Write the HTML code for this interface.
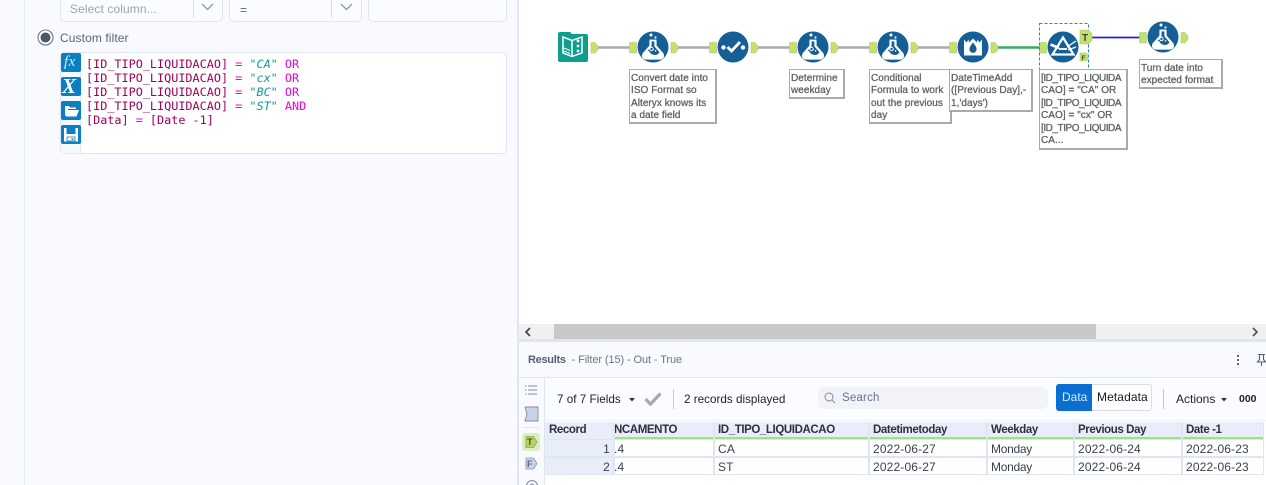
<!DOCTYPE html>
<html><head><meta charset="utf-8">
<style>
html,body{margin:0;padding:0;width:1266px;height:485px;overflow:hidden;background:#fff;font-family:"Liberation Sans",sans-serif}
.a{position:absolute;box-sizing:border-box}
.t{position:absolute;white-space:nowrap}
.note{position:absolute;box-sizing:border-box;background:#fff;border:1px solid #aaa;border-right:2px solid #aaa;border-bottom:2px solid #aaa;font:10px/12.4px "Liberation Sans",sans-serif;-webkit-text-stroke:.3px #626262;color:#626262;padding:3px 0 0 1px;white-space:nowrap;letter-spacing:.05px}
.note span{letter-spacing:-.45px}
.code{position:absolute;left:86px;font:11.8px/14px "DejaVu Sans Mono",monospace;white-space:pre;color:#a0005a}
.k{color:#f000e0}.s{color:#109a9a;font-style:italic}
.hd,.cell{position:absolute;box-sizing:border-box;font-size:12px;white-space:nowrap;letter-spacing:.15px}
.hd{top:422px;height:17px;background:#e9edf9;border-bottom:2px solid #97e87a;color:#2c3140;font-weight:bold;font-size:11.5px;letter-spacing:-.4px;line-height:17px;padding-left:3px}
.cell{height:16px;background:#fff;color:#3a3f4d;line-height:18px;padding-left:4px}
.rec{background:#e9edf9;text-align:right;padding-right:3px;padding-left:0}
</style></head><body>

<!-- left panel -->
<div class="a" style="left:0;top:0;width:518px;height:485px;background:#f8faff"></div>
<div class="a" style="left:24px;top:0;width:1px;height:485px;background:#e1e7f3"></div>
<div class="a" style="left:517px;top:0;width:2px;height:485px;background:#dfe5f1"></div>

<div class="a" style="left:60px;top:-8px;width:163px;height:30px;background:#fafcff;border:1px solid #dfe5f1;border-radius:5px"></div>
<div class="a" style="left:193px;top:0;width:1px;height:18px;background:#d8deea"></div>
<div class="t" style="left:70px;top:2px;font-size:12px;line-height:15px;color:#98a3bb;letter-spacing:.1px">Select column...</div>
<svg class="a" style="left:201px;top:3px" width="13" height="8"><path d="M1 1l5.500 5.500L12 1" fill="none" stroke="#8c98b0" stroke-width="1.300"/></svg>

<div class="a" style="left:229px;top:-8px;width:133px;height:30px;background:#fafcff;border:1px solid #dfe5f1;border-radius:5px"></div>
<div class="a" style="left:331px;top:0;width:1px;height:18px;background:#d8deea"></div>
<div class="t" style="left:240px;top:3px;font-size:12px;line-height:15px;color:#5a6478">=</div>
<svg class="a" style="left:340px;top:3px" width="13" height="8"><path d="M1 1l5.500 5.500L12 1" fill="none" stroke="#8c98b0" stroke-width="1.300"/></svg>

<div class="a" style="left:368px;top:-8px;width:139px;height:30px;background:#fafcff;border:1px solid #dfe5f1;border-radius:5px"></div>

<svg class="a" style="left:37px;top:29px" width="17" height="17"><circle cx="8.500" cy="8.500" r="7.500" fill="#fff" stroke="#6a7488" stroke-width="1.100"/><circle cx="8.500" cy="8.500" r="5" fill="#4b566f"/></svg>
<div class="t" style="left:60px;top:31px;font-size:12px;line-height:15px;color:#5a6478;letter-spacing:.1px">Custom filter</div>

<div class="a" style="left:60px;top:52px;width:447px;height:102px;background:#fff;border:1px solid #dfe5f1;border-radius:5px"></div>
<div class="a" style="left:61px;top:53px;width:20px;height:100px;background:#f6f8fd;border-right:1px solid #dfe5f1"></div>

<div class="a" style="left:61px;top:53px;width:20px;height:19px;background:#0a7fc2;border-radius:2px"></div>
<div class="t" style="left:64px;top:53px;font:italic 15px/18px 'Liberation Serif',serif;color:#dcecf7;letter-spacing:.5px">fx</div>
<div class="a" style="left:61px;top:77px;width:20px;height:19px;background:#0a7fc2;border-radius:2px"></div>
<div class="t" style="left:62px;top:76px;font:italic bold 21px/20px 'Liberation Serif',serif;color:#fff">X</div>
<div class="a" style="left:61px;top:101px;width:20px;height:19px;background:#0a7fc2;border-radius:2px"></div>
<svg class="a" style="left:61px;top:101px" width="20" height="19"><path d="M4 5h4l1 1.500h6V8H7L5.500 15 4 14.500z" fill="#fff"/><path d="M6.500 9H18l-2.500 6.500H5z" fill="#fff"/></svg>
<div class="a" style="left:61px;top:125px;width:20px;height:19px;background:#0a7fc2;border-radius:2px"></div>
<svg class="a" style="left:61px;top:125px" width="20" height="19"><path d="M3 3h14v13.500H3z" fill="#fff"/><path d="M5.500 3h9v6h-9z" fill="#0a7fc2"/><path d="M6 12h8v4H6z" fill="#fff" stroke="#0a7fc2" stroke-width=".8"/><path d="M10.500 13.500h2v1.500h-2z" fill="#0a7fc2"/></svg>

<div class="code" style="top:57px">[ID_TIPO_LIQUIDACAO] <span class="k">=</span> <span class="s">"CA"</span> <span class="k">OR</span></div>
<div class="code" style="top:71px">[ID_TIPO_LIQUIDACAO] <span class="k">=</span> <span class="s">"cx"</span> <span class="k">OR</span></div>
<div class="code" style="top:85px">[ID_TIPO_LIQUIDACAO] <span class="k">=</span> <span class="s">"BC"</span> <span class="k">OR</span></div>
<div class="code" style="top:99px">[ID_TIPO_LIQUIDACAO] <span class="k">=</span> <span class="s">"ST"</span> <span class="k">AND</span></div>
<div class="code" style="top:113px">[Data] <span class="k">=</span> [Date -1]</div>

<!-- canvas -->
<svg class="a" style="left:519px;top:0" width="747" height="324" viewBox="519 0 747 324">
<defs>
<g id="flask">
<circle r="15.500" fill="#155e96"/>
<circle cx="-2" cy="-12" r="1.500" fill="#fff"/><circle cx="2.500" cy="-9.500" r="1.100" fill="#fff"/>
<path d="M-3.500-6.500h7" stroke="#fff" stroke-width="1.800" fill="none"/>
<path d="M-2.500-6v5L-9.500 7q-1.500 4 2.500 4.500h14q4-.5 2.500-4.500L2.500-1V-6" fill="none" stroke="#fff" stroke-width="2.200"/>
<path d="M-9.500 6q3-2 5.500-2 2 4 6 4 3.500 0 5-4l3 2q1.500 5-2 5.500H-7q-3.500-.5-2.500-5.500z" fill="#fff"/>
<circle cx="-1.500" cy="2" r="1.700" fill="none" stroke="#fff" stroke-width="1"/>
<circle cx="2.500" cy="3.800" r=".8" fill="#fff"/>
</g>
<path id="anOut" d="M0-.5h4l3 3.500v3.500L4 10H0z" fill="#c2e074" stroke="#a8c85c" stroke-width=".5"/>
<path id="anIn" d="M-.5-.5h7v10.500h-7z" fill="#c2e074" stroke="#a8c85c" stroke-width=".5"/>
</defs>

<path d="M597 47.500h34M677 47.500h34M757 47.500h34M837 47.500h34M917 47.500h34" stroke="#ababab" stroke-width="2.400" fill="none"/>
<path d="M997 47.500h43" stroke="#3aa860" stroke-width="2.400" fill="none"/>
<path d="M1092 37.500h48" stroke="#2222d8" stroke-width="1.700" fill="none"/>

<!-- book -->
<path d="M558 34q0-2 2-2h10l2 2h14q2 0 2 2v24q0 2-2 2h-26q-2 0-2-2z" fill="#0e9e8c"/>
<path d="M563 37l9 3.500 10-3.500v16l-10 3.500-9-3.500z" fill="none" stroke="#fff" stroke-width="1.500"/>
<path d="M572 40.500v16" stroke="#fff" stroke-width="1.500"/>
<circle cx="578" cy="41" r="1.400" fill="#fff"/><circle cx="578" cy="46" r="1.400" fill="#fff"/><circle cx="578" cy="51" r="1.400" fill="#fff"/>
<path d="M564 48l6 2.500M564 51l6 2.500" stroke="#fff" stroke-width="1"/>

<use href="#anOut" x="591" y="43"/>
<use href="#anIn" x="630" y="43"/>
<use href="#flask" x="653" y="47"/>
<use href="#anOut" x="671" y="43"/>
<use href="#anIn" x="710" y="43"/>
<circle cx="733" cy="47" r="15.500" fill="#155e96"/>
<circle cx="723.500" cy="47.500" r="2.200" fill="#fff"/><circle cx="743" cy="47.500" r="2.200" fill="#fff"/>
<path d="M727.500 47l4 4 8.500-9" fill="none" stroke="#fff" stroke-width="2.800"/>
<use href="#anOut" x="751" y="43"/>
<use href="#anIn" x="790" y="43"/>
<use href="#flask" x="813" y="47"/>
<use href="#anOut" x="831" y="43"/>
<use href="#anIn" x="870" y="43"/>
<use href="#flask" x="893" y="47"/>
<use href="#anOut" x="911" y="43"/>
<use href="#anIn" x="950" y="43"/>

<!-- datetime tool -->
<circle cx="973" cy="47" r="15.500" fill="#155e96"/>
<path d="M964 39.500l2.500 3 2-3 .5 3 4-4 4 4 .5-3 2 3 2.500-3V55.500h-18z" fill="#fff"/>
<path d="M973 42.500q3.600 4.200 3.600 6.800a3.600 3.600 0 0 1-7.200 0q0-2.600 3.600-6.800z" fill="#155e96"/>
<use href="#anOut" x="991" y="43"/>
<use href="#anIn" x="1040" y="43"/>

<!-- filter tool -->
<rect x="1039.500" y="23.500" width="49" height="47" fill="none" stroke="#1f86d0" stroke-width="1" stroke-dasharray="3 2"/>
<circle cx="1063" cy="47" r="15.500" fill="#155e96"/>
<path d="M1063 37.500l10.500 17h-21z" fill="none" stroke="#fff" stroke-width="2.200"/>
<path d="M1059 49h8" stroke="#fff" stroke-width="1.800"/>
<path d="M1050.500 44.500l8.500 3.500" stroke="#fff" stroke-width="2.600"/>
<path d="M1067 47l9-6M1068 50l8-3" stroke="#fff" stroke-width="1.300"/>
<path d="M1080 30h8.500l3.500 4v6l-3.500 4H1080z" fill="#c2e074" stroke="#a8c85c" stroke-width=".6"/>
<text x="1082" y="41" font-family="Liberation Sans" font-weight="bold" font-size="10" fill="#3a4a20">T</text>
<path d="M1080 53h6l2 2v4l-2 2h-6z" fill="#c2e074" stroke="#a8c85c" stroke-width=".6"/>
<text x="1081.500" y="60" font-family="Liberation Sans" font-weight="bold" font-size="6.500" fill="#3a4a20">F</text>

<use href="#anIn" x="1140" y="33"/>
<use href="#flask" x="1163" y="37"/>
<use href="#anOut" x="1181" y="33"/>
</svg>

<div class="note" style="left:629px;top:69px;width:88px;height:55px">Convert date into<br>ISO Format so<br>Alteryx knows its<br>a date field</div>
<div class="note" style="left:789px;top:69px;width:56px;height:30px">Determine<br>weekday</div>
<div class="note" style="left:869px;top:69px;width:83px;height:55px">Conditional<br>Formula to work<br>out the previous<br>day</div>
<div class="note" style="left:949px;top:69px;width:84px;height:43px">DateTimeAdd<br>([Previous Day],-<br>1,'days')</div>
<div class="note" style="left:1039px;top:69px;width:89px;height:81px"><span>[ID_TIPO_LIQUIDA</span><br>CAO] = "CA" OR<br><span>[ID_TIPO_LIQUIDA</span><br>CAO] = "cx" OR<br><span>[ID_TIPO_LIQUIDA</span><br>CA...</div>
<div class="note" style="left:1139px;top:59px;width:84px;height:30px">Turn date into<br>expected format</div>

<!-- scrollbar -->
<div class="a" style="left:519px;top:324px;width:747px;height:16px;background:#f0f0f0"></div>
<div class="a" style="left:554px;top:324px;width:542px;height:15px;background:#c8c8c8"></div>
<svg class="a" style="left:523px;top:327px" width="10" height="10"><path d="M7 1L3 5l4 4" fill="none" stroke="#444" stroke-width="1.700"/></svg>
<svg class="a" style="left:1250px;top:327px" width="10" height="10"><path d="M3 1l4 4-4 4" fill="none" stroke="#555" stroke-width="1.700"/></svg>
<div class="a" style="left:519px;top:339px;width:747px;height:3px;background:#dfe6f3"></div>

<!-- results -->
<div class="a" style="left:519px;top:342px;width:747px;height:143px;background:#f8faff"></div>
<div class="t" style="left:528px;top:353px;font-size:11px;line-height:15px;color:#6a7488;letter-spacing:-.1px"><b style="color:#556074;letter-spacing:-.3px">Results</b>&nbsp; - Filter (15) - Out - True</div>
<div class="a" style="left:1237px;top:355px;width:2px;height:2px;background:#667;box-shadow:0 4px 0 #667,0 8px 0 #667"></div>
<svg class="a" style="left:1256px;top:353px" width="10" height="15"><path d="M2 1.500h7M3.500 1.500v5L1.500 9h8l-2-2.500v-5M5.500 9v4" fill="none" stroke="#556074" stroke-width="1.100"/></svg>
<div class="a" style="left:519px;top:377px;width:747px;height:1px;background:#dfe6f3"></div>
<div class="a" style="left:544px;top:378px;width:722px;height:107px;background:#fff"></div>
<div class="a" style="left:544px;top:378px;width:1px;height:107px;background:#dfe6f3"></div>
<div class="a" style="left:545px;top:378px;width:721px;height:42px;background:#fbfcff"></div>
<div class="a" style="left:545px;top:420px;width:721px;height:1px;background:#eef1f8"></div>

<svg class="a" style="left:524px;top:384px" width="16" height="50">
<path d="M4 2h9M4 6h9M4 10h9" stroke="#7f8ba3" stroke-width="1" fill="none"/>
<path d="M1 2h1.500M1 6h1.500M1 10h1.500" stroke="#7f8ba3" stroke-width="1" fill="none"/>
<path d="M1 23h13v14H1l2-7z" fill="#c9d3e8" stroke="#7f8ba3" stroke-width=".9"/>
</svg>
<div class="a" style="left:522px;top:427px;width:18px;height:1px;background:#e3e8f2"></div>
<div class="a" style="left:522px;top:433px;width:18px;height:18px;background:#dcedc4;border-radius:3px"></div>
<svg class="a" style="left:522px;top:433px" width="18" height="18"><path d="M4 3.500h7.500L15 9l-3.500 5.500H4z" fill="#b7d265" stroke="#8aa83f" stroke-width=".8"/></svg>
<div class="t" style="left:527px;top:435px;font:bold 9px/14px 'Liberation Sans',sans-serif;color:#41521a">T</div>
<svg class="a" style="left:522px;top:455px" width="18" height="18"><path d="M4 3h7.500L15 8.500l-3.500 5.500H4z" fill="#c9d3e8" stroke="#8b97b0" stroke-width=".8"/></svg>
<div class="t" style="left:527px;top:457px;font:bold 9px/14px 'Liberation Sans',sans-serif;color:#5a6a8a">F</div>
<svg class="a" style="left:524px;top:478px" width="16" height="7"><circle cx="8" cy="8" r="5.500" fill="none" stroke="#7f8ba3" stroke-width="1.100"/><circle cx="8" cy="8" r="2" fill="none" stroke="#7f8ba3" stroke-width="1"/></svg>

<div class="t" style="left:557px;top:392px;font-size:11.700px;line-height:15px;color:#20242e">7 of 7 Fields</div>
<svg class="a" style="left:629px;top:398px" width="7" height="4"><path d="M0 0h6L3 3.500z" fill="#333"/></svg>
<svg class="a" style="left:644px;top:391px" width="18" height="15"><path d="M1.500 8l5 5L16.500 2.500" fill="none" stroke="#a9a9a9" stroke-width="3.300"/></svg>
<div class="a" style="left:673px;top:389px;width:1px;height:20px;background:#c4c9d2"></div>
<div class="t" style="left:684px;top:392px;font-size:11.700px;line-height:15px;color:#20242e">2 records displayed</div>

<div class="a" style="left:818px;top:387px;width:230px;height:22px;background:#f1f3f9;border-radius:5px"></div>
<svg class="a" style="left:824px;top:392px" width="12" height="12"><circle cx="5" cy="5" r="4" fill="none" stroke="#7f8ba3" stroke-width="1"/><path d="M8 8l3 3" stroke="#7f8ba3" stroke-width="1"/></svg>
<div class="t" style="left:842px;top:391px;font-size:11.500px;line-height:15px;color:#687388;letter-spacing:.2px">Search</div>

<div class="a" style="left:1056px;top:384px;width:96px;height:27px;background:#fff;border:1px solid #d6deee;border-radius:3px"></div>
<div class="a" style="left:1056px;top:384px;width:36px;height:27px;background:#0b6fd2;border-radius:3px 0 0 3px"></div>
<div class="t" style="left:1062px;top:390px;font-size:12px;line-height:15px;color:#dbe9fb">Data</div>
<div class="t" style="left:1097px;top:390px;font-size:12px;line-height:15px;color:#15181f;letter-spacing:.1px">Metadata</div>
<div class="a" style="left:1163px;top:389px;width:1px;height:20px;background:#c4c9d2"></div>
<div class="t" style="left:1176px;top:392px;font-size:12px;line-height:15px;color:#20242e">Actions</div>
<svg class="a" style="left:1221px;top:398px" width="7" height="4"><path d="M0 0h6L3 3.500z" fill="#333"/></svg>
<div class="t" style="left:1239px;top:392px;font:bold 10.500px/14px 'Liberation Sans',sans-serif;color:#222">000</div>

<!-- table -->
<div class="hd" style="left:545px;width:68px;border-bottom-color:#e9edf9;padding-left:4px">Record</div>
<div class="hd" style="left:614px;width:100px;padding-left:0">NCAMENTO</div>
<div class="hd" style="left:715px;width:153px">ID_TIPO_LIQUIDACAO</div>
<div class="hd" style="left:870px;width:116px">Datetimetoday</div>
<div class="hd" style="left:988px;width:85px">Weekday</div>
<div class="hd" style="left:1075px;width:106px">Previous Day</div>
<div class="hd" style="left:1183px;width:80px">Date -1</div>

<div class="a" style="left:545px;top:439px;width:718px;height:1px;background:#dfe6f3"></div>
<div class="a" style="left:545px;top:456px;width:718px;height:2px;background:#dfe6f3"></div>
<div class="a" style="left:545px;top:474px;width:718px;height:1px;background:#dfe6f3"></div>

<div class="cell rec" style="left:545px;top:440px;width:68px">1</div>
<div class="cell" style="left:614px;top:440px;width:100px;padding-left:0">.4</div>
<div class="cell" style="left:715px;top:440px;width:153px;padding-left:3px">CA</div>
<div class="cell" style="left:870px;top:440px;width:116px;padding-left:3px">2022-06-27</div>
<div class="cell" style="left:988px;top:440px;width:85px;padding-left:3px;letter-spacing:-.3px">Monday</div>
<div class="cell" style="left:1075px;top:440px;width:106px;padding-left:3px">2022-06-24</div>
<div class="cell" style="left:1183px;top:440px;width:80px;padding-left:3px">2022-06-23</div>

<div class="cell rec" style="left:545px;top:458px;width:68px">2</div>
<div class="cell" style="left:614px;top:458px;width:100px;padding-left:0">.4</div>
<div class="cell" style="left:715px;top:458px;width:153px;padding-left:3px">ST</div>
<div class="cell" style="left:870px;top:458px;width:116px;padding-left:3px">2022-06-27</div>
<div class="cell" style="left:988px;top:458px;width:85px;padding-left:3px;letter-spacing:-.3px">Monday</div>
<div class="cell" style="left:1075px;top:458px;width:106px;padding-left:3px">2022-06-24</div>
<div class="cell" style="left:1183px;top:458px;width:80px;padding-left:3px">2022-06-23</div>

<div class="a" style="left:613px;top:422px;width:2px;height:53px;background:#dfe6f3"></div>
<div class="a" style="left:713px;top:422px;width:2px;height:53px;background:#dfe6f3"></div>
<div class="a" style="left:868px;top:422px;width:2px;height:53px;background:#dfe6f3"></div>
<div class="a" style="left:986px;top:422px;width:2px;height:53px;background:#dfe6f3"></div>
<div class="a" style="left:1073px;top:422px;width:2px;height:53px;background:#dfe6f3"></div>
<div class="a" style="left:1181px;top:422px;width:2px;height:53px;background:#dfe6f3"></div>
<div class="a" style="left:1263px;top:422px;width:1px;height:53px;background:#dfe6f3"></div>
</body></html>
